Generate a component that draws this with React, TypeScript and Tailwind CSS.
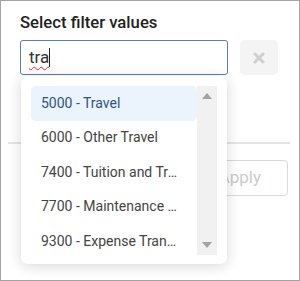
import React from "react";

const items = [
  "5000 - Travel",
  "6000 - Other Travel",
  "7400 - Tuition and Training",
  "7700 - Maintenance and Repairs",
  "9300 - Expense Transfers",
];

export default function App() {
  return (
    <div
      className="relative w-[300px] h-[281px] border border-[#a3a3a3] bg-white overflow-hidden"
      style={{ fontFamily: "Roboto, 'Liberation Sans', sans-serif" }}
    >
      <div className="pl-[19px] pr-[21px] pt-[12px]">
        <div className="text-[16.7px] leading-[20px] font-medium text-[#222]">Select filter values</div>
        <div className="mt-[7px] flex gap-[12px]">
          <div className="w-[208px] h-[35px] border border-[#5b7fa8] rounded-[3px] flex items-center pl-[8px]">
            <span className="text-[17px] text-[#333] underline decoration-wavy decoration-[#e03030] decoration-1 underline-offset-[3px]">tra</span>
            <span className="w-px h-[19px] bg-[#222]" />
          </div>
          <div className="w-[38px] h-[35px] rounded-[5px] bg-[#f4f4f4] flex items-center justify-center">
            <svg width="12" height="12" viewBox="0 0 12 12">
              <path d="M2 2 L10 10 M10 2 L2 10" stroke="#cfcfcf" strokeWidth="3" strokeLinecap="round" />
            </svg>
          </div>
        </div>
        <div className="-mx-3 mt-[67px] h-[2px] bg-[#e4e4e4]" />
        <div className="flex justify-end -mr-[10px] mt-[16px]">
          <div className="h-[36px] px-[26px] border-[1.5px] border-[#d9d9d9] rounded-[4px] flex items-center text-[17px] text-[#cccccc]">
            Apply
          </div>
        </div>
      </div>

      <div className="absolute left-[20px] top-[75px] w-[206px] h-[188px] bg-white rounded-[7px] shadow-[0_2px_14px_rgba(0,0,0,0.16)] pl-[10px] pr-[9px] pt-[10px] pb-[9px] flex">
        <div className="w-[166px] overflow-hidden">
          {items.map((t, i) => (
            <div
              key={t}
              className={
                "h-[34.5px] rounded-[5px] pl-[10px] pr-[14.5px] flex items-center text-[14px] " +
                (i === 0 ? "bg-[#ebf3fc] text-[#30557f]" : "text-[#444]")
              }
            >
              <span className="truncate">{t}</span>
            </div>
          ))}
        </div>
        <div className="w-[20px] bg-[#f1f1f1] flex flex-col items-center justify-between py-[7px]">
          <svg width="10" height="6" viewBox="0 0 10 6">
            <path d="M5 0 L10 6 L0 6 Z" fill="#a3a3a3" />
          </svg>
          <svg width="10" height="6" viewBox="0 0 10 6">
            <path d="M0 0 L10 0 L5 6 Z" fill="#a3a3a3" />
          </svg>
        </div>
      </div>
    </div>
  );
}
